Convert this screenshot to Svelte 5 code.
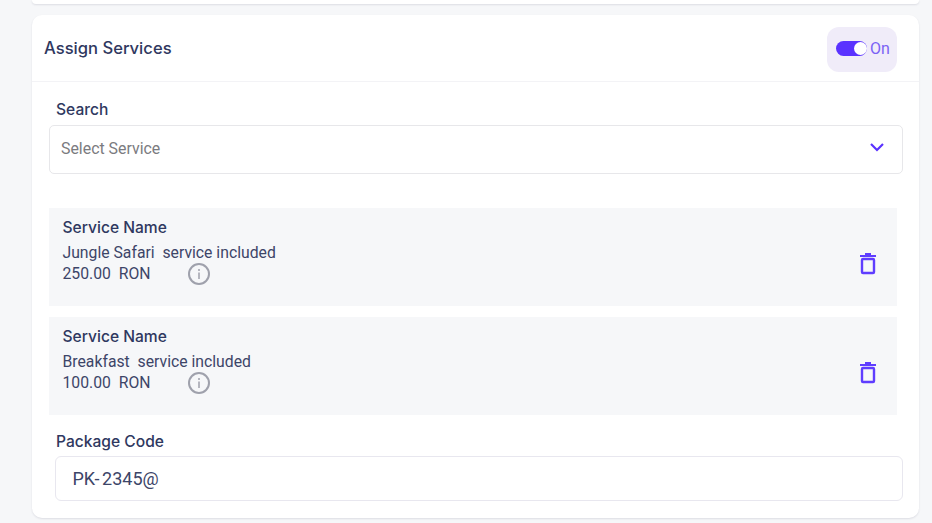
<script>
    let services = [
        { name: "Jungle Safari", price: "250.00" },
        { name: "Breakfast", price: "100.00" },
    ];
</script>

<div class="page">
    <div class="prev-card"></div>

    <section class="card">
        <header class="card-head">
            <h2>Assign Services</h2>
            <div class="toggle-box">
                <span class="toggle"><span class="knob"></span></span>
                <span class="toggle-label">On</span>
            </div>
        </header>

        <div class="search">
            <span class="label">Search</span>
            <div class="select">
                <span>Select Service</span>
                <svg class="chevron" width="16" height="10" viewBox="0 0 16 10" fill="none">
                    <path d="M2 2l6 6 6-6" stroke="#5a32ff" stroke-width="2.2" />
                </svg>
            </div>
        </div>

        <div class="services">
            {#each services as s}
                <div class="service">
                    <div class="info">
                        <div class="title">Service Name</div>
                        <div class="line">{s.name}&nbsp; service included</div>
                        <div class="price">
                            <span class="amount">{s.price}&nbsp; RON</span>
                            <svg class="info-icon" width="24" height="24" viewBox="0 0 24 24" fill="none">
                                <circle cx="12" cy="12" r="10" stroke="#9fa1ac" stroke-width="2" />
                                <rect x="11" y="10.5" width="2" height="6.5" fill="#b5b6bf" />
                                <rect x="11" y="7" width="2" height="2" fill="#b5b6bf" />
                            </svg>
                        </div>
                    </div>
                    <svg class="trash" width="18" height="22" viewBox="0 0 18 22" fill="none">
                        <path d="M6 1h6" stroke="#5f3dff" stroke-width="2" />
                        <path d="M1 3h16" stroke="#5f3dff" stroke-width="2" />
                        <rect x="3" y="6" width="12" height="14" rx="1" stroke="#5f3dff" stroke-width="2.4" />
                    </svg>
                </div>
            {/each}
        </div>

        <div class="code">
            <span class="label">Package Code</span>
            <div class="code-input">PK- 2345@</div>
        </div>
    </section>
</div>

<style>
    :global(body) {
        background: #f6f7f9;
        overflow: hidden;
    }

    .page {
        width: 932px;
        height: 523px;
        padding: 0 13px 0 32px;
        box-sizing: border-box;
        font-family: Inter, "Liberation Sans", sans-serif;
        color: #2f3860;
    }

    .prev-card {
        height: 4px;
        background: #fff;
        border-radius: 0 0 10px 10px;
        box-shadow: 0 1px 2px rgba(40, 45, 70, 0.12);
        margin-bottom: 11px;
    }

    .card {
        height: 503px;
        background: #fff;
        border-radius: 10px;
        box-shadow: 0 1px 2px rgba(40, 45, 70, 0.12);
        box-sizing: border-box;
    }

    .card-head {
        height: 67px;
        box-sizing: border-box;
        padding: 12px 22px 0 12px;
        display: flex;
        justify-content: space-between;
        border-bottom: 1px solid #f3f3f6;
    }

    h2 {
        margin: 9px 0 0;
        font-size: 16.6px;
        line-height: 24px;
        font-weight: 500;
    }

    .toggle-box {
        width: 70px;
        height: 45px;
        border-radius: 12px;
        background: #f0ecf9;
        display: flex;
        align-items: center;
        padding-left: 9px;
        box-sizing: border-box;
        gap: 3px;
    }

    .toggle {
        width: 31px;
        height: 15px;
        margin-top: -2px;
        border-radius: 8px;
        background: #5a32ff;
        position: relative;
    }

    .knob {
        position: absolute;
        right: 0;
        top: 1px;
        width: 13px;
        height: 13px;
        border-radius: 50%;
        background: #fff;
    }

    .toggle-label {
        font-family: Roboto, sans-serif;
        font-size: 16px;
        line-height: 18px;
        margin-top: -2px;
        color: #7a62f5;
    }

    .search {
        padding: 18px 16px 0 17px;
    }

    .label {
        display: block;
        font-size: 15.6px;
        line-height: 20px;
        font-weight: 500;
        margin-left: 7px;
    }

    .select {
        height: 49px;
        margin-top: 5px;
        box-sizing: border-box;
        border: 1px solid #e7e7ea;
        border-radius: 5px;
        display: flex;
        align-items: center;
        justify-content: space-between;
        padding: 0 17px 0 11px;
        font-family: Roboto, sans-serif;
        font-size: 15.9px;
        color: #7b7b80;
    }

    .select span {
        margin-top: -2px;
    }

    .chevron {
        margin-top: -6px;
    }

    .services {
        margin: 34px 22px 0 17px;
        display: flex;
        flex-direction: column;
        gap: 11px;
    }

    .service {
        height: 98px;
        box-sizing: border-box;
        background: #f6f7f9;
        padding: 10px 20px 0 13.5px;
        display: flex;
        justify-content: space-between;
    }

    .title {
        font-size: 15.6px;
        line-height: 20px;
        font-weight: 500;
    }

    .line {
        font-family: Roboto, sans-serif;
        font-size: 15.75px;
        line-height: 21px;
        margin-top: 4px;
        color: #3d4568;
    }

    .price {
        display: flex;
        align-items: flex-start;
        font-family: Roboto, sans-serif;
        font-size: 15.75px;
        line-height: 21px;
        color: #3d4568;
    }

    .amount {
        width: 124.5px;
    }

    .info-icon {
        margin-top: -1px;
    }

    .trash {
        margin-top: 35px;
    }

    .code {
        padding: 17px 16px 0 17px;
    }

    .code-input {
        margin: 4px 0 0 6px;
        height: 45px;
        box-sizing: border-box;
        border: 1px solid #e8e7ef;
        border-radius: 6px;
        padding: 0 16.5px;
        display: flex;
        align-items: center;
        font-family: Roboto, sans-serif;
        font-size: 18px;
        word-spacing: -2px;
        color: #3d4568;
    }
</style>
